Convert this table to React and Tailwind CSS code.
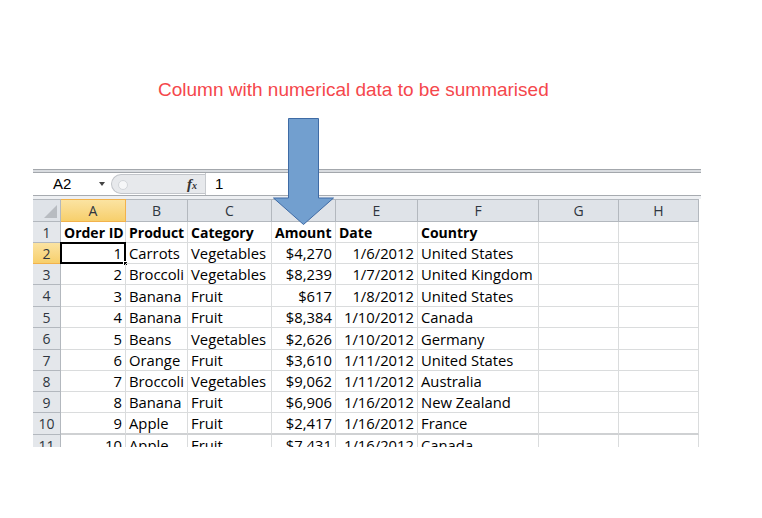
import clsx from 'clsx'

const cols = ['A', 'B', 'C', 'D', 'E', 'F', 'G', 'H']

const rows = [
  ['Order ID', 'Product', 'Category', 'Amount', 'Date', 'Country'],
  ['1', 'Carrots', 'Vegetables', '$4,270', '1/6/2012', 'United States'],
  ['2', 'Broccoli', 'Vegetables', '$8,239', '1/7/2012', 'United Kingdom'],
  ['3', 'Banana', 'Fruit', '$617', '1/8/2012', 'United States'],
  ['4', 'Banana', 'Fruit', '$8,384', '1/10/2012', 'Canada'],
  ['5', 'Beans', 'Vegetables', '$2,626', '1/10/2012', 'Germany'],
  ['6', 'Orange', 'Fruit', '$3,610', '1/11/2012', 'United States'],
  ['7', 'Broccoli', 'Vegetables', '$9,062', '1/11/2012', 'Australia'],
  ['8', 'Banana', 'Fruit', '$6,906', '1/16/2012', 'New Zealand'],
  ['9', 'Apple', 'Fruit', '$2,417', '1/16/2012', 'France'],
  ['10', 'Apple', 'Fruit', '$7,431', '1/16/2012', 'Canada'],
]

// numbers, amounts and dates sit on the right
const rightAligned = [true, false, false, true, true, false, false, false]

function Cell({ value, right, bold, selected, thick }) {
  return (
    <div
      className={clsx(
        'relative flex items-center whitespace-nowrap border-r border-[#dadcdd] px-[3px] pt-[1px] text-black',
        thick ? 'border-b-2 border-b-[#cfd1d3]' : 'border-b',
        right && !bold && 'justify-end',
        bold && 'text-[14px] font-bold'
      )}
    >
      {value}
      {selected && (
        <>
          <div className="pointer-events-none absolute -left-[1px] -top-[1px] -right-[1px] -bottom-[1px] border-2 border-black" />
          <div className="absolute -bottom-[3px] -right-[3px] h-[5px] w-[5px] border border-white bg-black" />
        </>
      )}
    </div>
  )
}

function Sheet() {
  return (
    <div className="ml-[33px] h-[278px] w-[668px] overflow-hidden font-['Open_Sans',sans-serif] text-[14.8px]">
      {/* ribbon edge */}
      <div className="h-[4px] border-y border-[#a3a7ac] bg-[#d9dce0]" />

      {/* formula bar */}
      <div className="flex h-[23px] border-b border-[#a7abb0] bg-white">
        <div className="flex w-[78px] items-center justify-between pl-[20px] pr-[6px] font-['Liberation_Sans',sans-serif] text-[15px] text-black">
          <span>A2</span>
          <span className="h-0 w-0 border-x-[3.5px] border-t-[4px] border-x-transparent border-t-[#444]" />
        </div>
        <div className="relative my-[1px] flex w-[94px] items-center justify-end rounded-l-full border border-r-0 border-[#c2c5ca] bg-[#e7e9ec] pr-[8px]">
          <div className="absolute left-[6px] top-[5px] h-[10px] w-[10px] rounded-full border border-[#d3d6da] bg-[#f6f7f8]" />
          <span className="font-['Liberation_Serif',serif] text-[15px] font-bold italic leading-none text-[#333]">
            f<span className="text-[10px]">x</span>
          </span>
        </div>
        <div className="flex flex-1 items-center border-l border-[#c8cbcf] pl-[9px] font-['Liberation_Sans',sans-serif] text-[15px] text-black">
          1
        </div>
      </div>
      <div className="h-[3px] bg-[#eef0f3]" />

      <div className="grid grid-cols-[28px_65px_62px_84px_64px_82px_121px_80px_80px] grid-rows-[23px_21px_21px_21px_22px_21px_22px_21px_21px_21px_22px_21px]">
        {/* header row */}
        <div className="relative border-y border-r border-[#b3b8be] bg-[#dfe3e8]">
          <div className="absolute bottom-[3px] right-[3px] h-0 w-0 [border-bottom:13px_solid_#b8bcc1] [border-left:13px_solid_transparent]" />
        </div>
        {cols.map((c) => (
          <div
            key={c}
            className={clsx(
              'flex items-center justify-center border-y border-r text-[14px] text-[#2f3640]',
              c === 'A'
                ? 'border-[#f2b24c] bg-gradient-to-b from-[#fbe3a1] to-[#f7cf6b]'
                : 'border-[#b3b8be] bg-[#dfe3e8]'
            )}
          >
            {c}
          </div>
        ))}

        {rows.map((r, i) => (
          <div key={i} className="contents">
            <div
              className={clsx(
                'flex items-center justify-center border-b border-r text-[14px] text-[#2f3640]',
                i === 1
                  ? 'border-[#f2b24c] bg-gradient-to-b from-[#fbe3a1] to-[#f7cf6b]'
                  : 'border-[#b3b8be] bg-[#e4e7eb]'
              )}
            >
              {i + 1}
            </div>
            {cols.map((c, j) => (
              <Cell
                key={c}
                value={r[j] || ''}
                right={rightAligned[j]}
                bold={i === 0}
                selected={i === 1 && j === 0}
                thick={i === 9}
              />
            ))}
          </div>
        ))}
      </div>
    </div>
  )
}

export default function App() {
  return (
    <div className="relative h-[518px] w-[762px] overflow-hidden bg-white">
      <div className="h-[169px] pl-[158px] pt-[80px] font-['Liberation_Sans',sans-serif] text-[19px] leading-[20px] text-[#f5474c]">
        Column with numerical data to be summarised
      </div>
      <Sheet />

      {/* callout arrow pointing at the Amount column */}
      <svg className="absolute left-[273px] top-[118px]" width="62" height="108" viewBox="0 0 62 108">
        <path
          d="M15.5 0.5 H45.5 V80 H60.5 L30.5 106.5 L0.5 80 H15.5 Z"
          fill="#729fcf"
          stroke="#3f6ba5"
          strokeWidth="1"
        />
      </svg>
    </div>
  )
}
